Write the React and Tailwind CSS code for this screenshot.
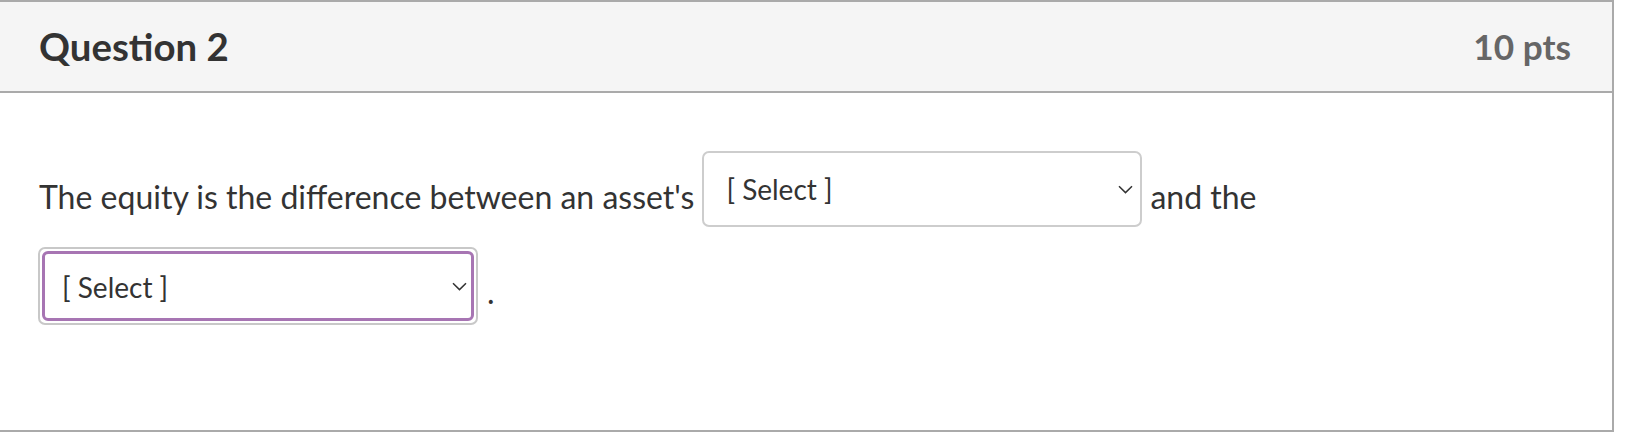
import { useState } from 'react';

function Chevron() {
  return (
    <svg width="15" height="9" viewBox="0 0 15 9" fill="none" className="shrink-0">
      <path d="M1 1.2 L7.5 7.6 L14 1.2" stroke="#333" strokeWidth="1.5" />
    </svg>
  );
}

function FakeSelect({ focused }) {
  if (focused) {
    return (
      <div className="rounded-[7px] border-2 border-[#c8c8c8] p-[2px]">
        <div className="flex h-[70px] w-[432px] items-center justify-between rounded-[6px] border-[3px] border-[#a775b3] pl-[17px] pr-[4px]">
          <span className="pt-[2px] text-[28px] text-[#333]">[ Select ]</span>
          <Chevron />
        </div>
      </div>
    );
  }
  return (
    <div className="flex h-[76px] w-[440px] items-center justify-between rounded-[7px] border-2 border-[#cdcdcd] pl-[22px] pr-[7px]">
      <span className="text-[28px] text-[#333]">[ Select ]</span>
      <Chevron />
    </div>
  );
}

function App() {
  const [points] = useState(10);

  return (
    <div className="h-[444px] w-[1652px] bg-white" style={{ fontFamily: 'Lato, "Open Sans", sans-serif' }}>
      <div className="w-[1614px] border-t-2 border-r-2 border-b-2 border-[#aaa]">
        {/* header */}
        <div className="flex h-[91px] items-center justify-between border-b-2 border-[#aaa] bg-[#f5f5f5] pl-[39px] pr-[41px]">
          <h2 className="text-[38.4px] font-bold text-[#333]">Question 2</h2>
          <div className="text-[35.2px] font-bold text-[#666]">{points} pts</div>
        </div>

        {/* body */}
        <div className="h-[337px] pl-[39px] pt-[58px] text-[32px] text-[#333]">
          <div className="flex items-start">
            <span className="mt-[22px]">The equity is the difference between an asset's</span>
            <div className="ml-[8px] mr-[8px]">
              <FakeSelect />
            </div>
            <span className="mt-[22px]">and the</span>
          </div>
          <div className="-ml-[1px] mt-[20px] flex items-start">
            <FakeSelect focused />
            <span className="ml-[9px] mt-[21px]">.</span>
          </div>
        </div>
      </div>
    </div>
  );
}

export default App;
